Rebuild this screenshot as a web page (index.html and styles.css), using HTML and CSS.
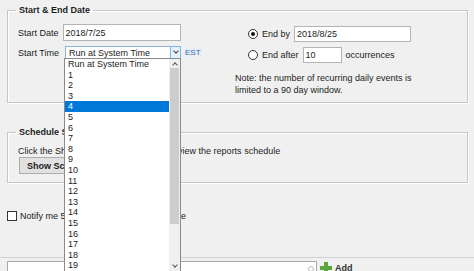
FILE: index.html
```html
<!DOCTYPE html>
<html lang="en">

<head>
    <meta charset="UTF-8">
    <title>Recurring Schedule</title>
    <link rel="stylesheet" href="styles.css">
</head>

<body>
    <!-- Start and end of the recurrence -->
    <fieldset class="group dates">
        <legend>Start &amp; End Date</legend>
        <div class="cols">
            <div class="col-start">
                <div class="row">
                    <span class="lbl">Start Date</span>
                    <span class="txt date">2018/7/25</span>
                </div>
                <div class="row row-time">
                    <span class="lbl">Start Time</span>
                    <span class="select">Run at System Time<span class="select-arrow"></span></span>
                    <span class="tz">EST</span>
                </div>
            </div>
            <div class="col-end">
                <div class="row">
                    <span class="radio checked"></span>
                    <span class="opt">End by</span>
                    <span class="txt end-date">2018/8/25</span>
                </div>
                <div class="row row-after">
                    <span class="radio"></span>
                    <span class="opt">End after</span>
                    <span class="txt count">10</span>
                    <span class="unit">occurrences</span>
                </div>
                <p class="note">Note: the number of recurring daily events is<br>limited to a 90 day window.</p>
            </div>
        </div>
    </fieldset>

    <fieldset class="group schedule">
        <legend>Schedule Summary</legend>
        <p class="hint">Click the Show Schedule button here to view the reports schedule</p>
        <span class="btn">Show Schedule</span>
    </fieldset>

    <div class="notify">
        <span class="check"></span>
        <span>Notify me 5 days before the events expire</span>
    </div>

    <div class="toolbar">
        <span class="search"><span class="search-icon"></span></span>
        <span class="add"><span class="plus"></span>Add</span>
    </div>

    <!-- Open list of the Start Time select -->
    <div class="dropdown">
        <ul class="options">
            <li>Run at System Time</li>
            <li>1</li>
            <li>2</li>
            <li>3</li>
            <li class="hl">4</li>
            <li>5</li>
            <li>6</li>
            <li>7</li>
            <li>8</li>
            <li>9</li>
            <li>10</li>
            <li>11</li>
            <li>12</li>
            <li>13</li>
            <li>14</li>
            <li>15</li>
            <li>16</li>
            <li>17</li>
            <li>18</li>
            <li>19</li>
        </ul>
        <div class="scrollbar">
            <span class="sb-up"></span>
            <span class="sb-thumb"></span>
            <span class="sb-down"></span>
        </div>
    </div>
</body>

</html>
```

FILE: styles.css
```css
* {
    box-sizing: border-box;
}

body {
    margin: 0;
    width: 474px;
    height: 271px;
    overflow: hidden;
    position: relative;
    background-color: #f0f0f0;
    font-family: "Liberation Sans", Arial, sans-serif;
    font-size: 9px;
    color: #1c1c1c;
}

p {
    margin: 0;
}

.group {
    width: 461px;
    margin: 4px 0 0 7px;
    padding: 8px 10px 6px 10px;
    border: 1px solid #c6c6c6;
    box-shadow: inset 1px 1px 0 #fff, 1px 1px 0 #fff;
    min-width: 0;
}

.group legend {
    padding: 0 3px;
    margin-left: -2px;
    line-height: 12px;
    font-weight: bold;
    color: #1c1c1c;
}

.cols {
    display: flex;
}

.col-start {
    width: 217px;
}

.row {
    display: flex;
    align-items: center;
    height: 17px;
}

.row-time {
    margin-top: 5px;
    height: 13px;
}

.txt {
    display: flex;
    align-items: center;
    height: 17px;
    padding-left: 2px;
    background-color: #fff;
    border: 1px solid #b4b4b4;
    color: #1c1c1c;
}

.date {
    width: 118px;
    margin-left: 4px;
}

.select {
    position: relative;
    display: flex;
    align-items: center;
    width: 116px;
    height: 13px;
    margin-left: 6px;
    padding-left: 3px;
    background-color: #fff;
    border: 1px solid #8fb3d9;
}

.select-arrow {
    position: absolute;
    right: -1px;
    top: -1px;
    width: 11px;
    height: 13px;
    background-color: #e5f1fb;
    border: 1px solid #7eb4ea;
}

.select-arrow::after {
    content: "";
    position: absolute;
    left: 3px;
    top: 2px;
    width: 3px;
    height: 3px;
    border-right: 1px solid #444;
    border-bottom: 1px solid #444;
    transform: rotate(45deg);
}

.tz {
    margin-left: 3px;
    padding: 0 1px;
    font-size: 8px;
    color: #2f6db5;
    background-color: #e9eef4;
}

.col-end {
    padding-top: 2px;
}

.col-end .row {
    height: 16px;
}

.radio {
    position: relative;
    width: 10px;
    height: 10px;
    margin-left: 13px;
    border: 1px solid #333;
    border-radius: 50%;
    background-color: #fff;
}

.radio.checked::after {
    content: "";
    position: absolute;
    left: 2px;
    top: 2px;
    width: 4px;
    height: 4px;
    border-radius: 50%;
    background-color: #111;
}

.opt {
    margin-left: 4px;
}

.end-date {
    width: 117px;
    height: 16px;
    margin-left: 4px;
}

.col-end .row-after {
    margin-top: 5px;
}

.count {
    width: 39px;
    height: 16px;
    margin-left: 4px;
}

.unit {
    margin-left: 4px;
}

.note {
    margin-top: 9px;
    line-height: 12px;
}

.schedule {
    margin-top: 23px;
    padding-top: 7px;
    padding-bottom: 8px;
}

.hint {
    line-height: 12px;
}

.btn {
    display: inline-flex;
    align-items: center;
    height: 17px;
    margin-left: 1px;
    padding: 0 7px;
    background-color: #e1e1e1;
    border: 1px solid #adadad;
    font-weight: bold;
    color: #1c1c1c;
}

.notify {
    display: flex;
    align-items: center;
    gap: 3px;
    margin: 27px 0 0 7px;
    height: 12px;
}

.check {
    width: 10px;
    height: 10px;
    border: 1px solid #333;
    background-color: #fff;
}

.toolbar {
    display: flex;
    align-items: flex-start;
    margin-top: 35px;
    padding: 3px 0 0 7px;
    border-top: 1px solid #d2d2d2;
    height: 20px;
}

.search {
    position: relative;
    width: 310px;
    height: 16px;
    background-color: #fff;
    border: 1px solid #a9a9a9;
}

.search-icon {
    position: absolute;
    right: 2px;
    top: 4px;
    width: 6px;
    height: 6px;
    border: 1px solid #bbb;
    border-radius: 50%;
}

.add {
    display: flex;
    align-items: center;
    gap: 3px;
    margin: 1px 0 0 3px;
    font-weight: bold;
    color: #333;
}

.plus {
    position: relative;
    width: 12px;
    height: 12px;
}

.plus::before,
.plus::after {
    content: "";
    position: absolute;
    background-color: #5aa63a;
}

.plus::before {
    left: 4px;
    top: 0;
    width: 4px;
    height: 12px;
}

.plus::after {
    left: 0;
    top: 4px;
    width: 12px;
    height: 4px;
}

/* Open select list */
.dropdown {
    position: absolute;
    left: 64px;
    top: 58px;
    width: 117px;
    height: 216px;
    background-color: #fff;
    border: 1px solid #8a8a8a;
    display: flex;
}

.options {
    flex: 1;
    margin: 0;
    padding: 0;
    list-style: none;
}

.options li {
    height: 10.6px;
    line-height: 10.6px;
    padding-left: 3px;
    color: #1c1c1c;
}

.options li.hl {
    background-color: #0078d7;
    color: #fff;
}

.scrollbar {
    position: relative;
    width: 11px;
    background-color: #f0f0f0;
}

.sb-thumb {
    position: absolute;
    left: 1px;
    top: 9px;
    width: 9px;
    height: 156px;
    background-color: #cdcdcd;
}

.sb-up,
.sb-down {
    position: absolute;
    left: 4px;
    width: 4px;
    height: 4px;
    border-left: 1px solid #555;
    border-top: 1px solid #555;
}

.sb-up {
    top: 4px;
    transform: rotate(45deg);
}

.sb-down {
    top: 204px;
    transform: rotate(225deg);
}
```
